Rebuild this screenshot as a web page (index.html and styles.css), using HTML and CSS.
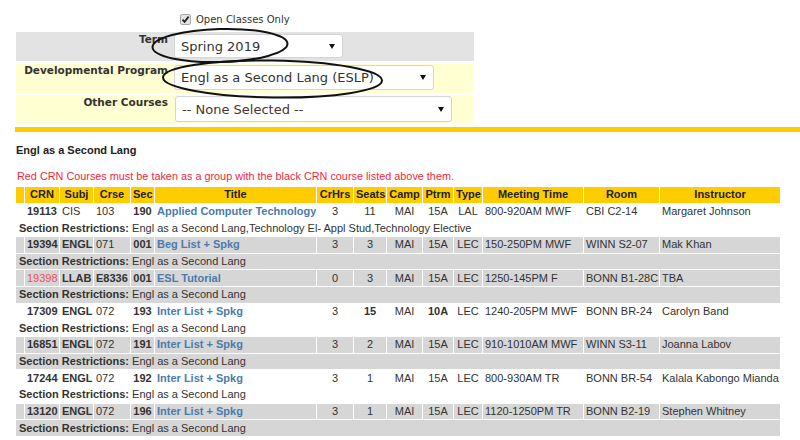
FILE: index.html
```html
<!DOCTYPE html>
<html>
<head>
<meta charset="utf-8">
<title>Class Search</title>
<link rel="stylesheet" href="styles.css">
</head>
<body>
<div class="page">
  <div class="form">
    <div class="check-line">
      <span class="checkbox"><svg width="9" height="9" viewBox="0 0 9 9"><path d="M1.5 4.6 L3.6 6.8 L7.6 1.6" fill="none" stroke="#222" stroke-width="1.8"/></svg></span>
      <span class="check-label">Open Classes Only</span>
    </div>
    <div class="frow grey">
      <div class="flabel">Term</div>
      <div class="select s1"><span>Spring 2019</span><i class="arrow"></i></div>
    </div>
    <div class="frow yel">
      <div class="flabel">Developmental Program</div>
      <div class="select s2"><span>Engl as a Second Lang (ESLP)</span><i class="arrow"></i></div>
    </div>
    <div class="frow yel r3">
      <div class="flabel">Other Courses</div>
      <div class="select s3"><span class="none">-- None Selected --</span><i class="arrow"></i></div>
    </div>
  </div>
  <div class="bar"></div>

  <h3 class="heading">Engl as a Second Lang</h3>
  <p class="note">Red CRN Courses must be taken as a group with the black CRN course listed above them.</p>

  <table class="courses">
    <colgroup>
      <col class="c0"><col class="c1"><col class="c2"><col class="c3"><col class="c4"><col class="c5"><col class="c6"><col class="c7"><col class="c8"><col class="c9"><col class="c10"><col class="c11"><col class="c12"><col class="c13">
    </colgroup>
    <thead>
      <tr><th></th><th>CRN</th><th>Subj</th><th>Crse</th><th>Sec</th><th>Title</th><th>CrHrs</th><th>Seats</th><th>Camp</th><th>Ptrm</th><th>Type</th><th>Meeting Time</th><th>Room</th><th>Instructor</th></tr>
    </thead>
    <tbody>
      <tr class="w"><td></td><td class="b ctr">19113</td><td>CIS</td><td>103</td><td class="b ctr">190</td><td><a class="lnk">Applied Computer Technology</a></td><td class="ctr">3</td><td class="ctr">11</td><td class="ctr">MAI</td><td class="ctr">15A</td><td class="ctr">LAL</td><td>800-920AM MWF</td><td>CBI C2-14</td><td>Margaret Johnson</td></tr>
      <tr class="w"><td colspan="14" class="res"><b>Section Restrictions:</b> Engl as a Second Lang,Technology El- Appl Stud,Technology Elective</td></tr>

      <tr class="g"><td></td><td class="b ctr">19394</td><td class="b">ENGL</td><td>071</td><td class="b ctr">001</td><td><a class="lnk">Beg List + Spkg</a></td><td class="ctr">3</td><td class="ctr">3</td><td class="ctr">MAI</td><td class="ctr">15A</td><td class="ctr">LEC</td><td>150-250PM MWF</td><td>WINN S2-07</td><td>Mak Khan</td></tr>
      <tr class="g"><td colspan="14" class="res"><b>Section Restrictions:</b> Engl as a Second Lang</td></tr>

      <tr class="g"><td></td><td class="ctr red">19398</td><td class="b">LLAB</td><td class="b">E8336</td><td class="b ctr">001</td><td><a class="lnk">ESL Tutorial</a></td><td class="ctr">0</td><td class="ctr">3</td><td class="ctr">MAI</td><td class="ctr">15A</td><td class="ctr">LEC</td><td>1250-145PM F</td><td>BONN B1-28C</td><td>TBA</td></tr>
      <tr class="g"><td colspan="14" class="res"><b>Section Restrictions:</b> Engl as a Second Lang</td></tr>

      <tr class="w"><td></td><td class="b ctr">17309</td><td class="b">ENGL</td><td>072</td><td class="b ctr">193</td><td><a class="lnk">Inter List + Spkg</a></td><td class="ctr">3</td><td class="ctr b">15</td><td class="ctr">MAI</td><td class="ctr b">10A</td><td class="ctr">LEC</td><td>1240-205PM MWF</td><td>BONN BR-24</td><td>Carolyn Band</td></tr>
      <tr class="w"><td colspan="14" class="res"><b>Section Restrictions:</b> Engl as a Second Lang</td></tr>

      <tr class="g"><td></td><td class="b ctr">16851</td><td class="b">ENGL</td><td>072</td><td class="b ctr">191</td><td><a class="lnk">Inter List + Spkg</a></td><td class="ctr">3</td><td class="ctr">2</td><td class="ctr">MAI</td><td class="ctr">15A</td><td class="ctr">LEC</td><td>910-1010AM MWF</td><td>WINN S3-11</td><td>Joanna Labov</td></tr>
      <tr class="g"><td colspan="14" class="res"><b>Section Restrictions:</b> Engl as a Second Lang</td></tr>

      <tr class="w"><td></td><td class="b ctr">17244</td><td class="b">ENGL</td><td>072</td><td class="b ctr">192</td><td><a class="lnk">Inter List + Spkg</a></td><td class="ctr">3</td><td class="ctr">1</td><td class="ctr">MAI</td><td class="ctr">15A</td><td class="ctr">LEC</td><td>800-930AM TR</td><td>BONN BR-54</td><td>Kalala Kabongo Mianda</td></tr>
      <tr class="w"><td colspan="14" class="res"><b>Section Restrictions:</b> Engl as a Second Lang</td></tr>

      <tr class="g"><td></td><td class="b ctr">13120</td><td class="b">ENGL</td><td>072</td><td class="b ctr">196</td><td><a class="lnk">Inter List + Spkg</a></td><td class="ctr">3</td><td class="ctr">1</td><td class="ctr">MAI</td><td class="ctr">15A</td><td class="ctr">LEC</td><td>1120-1250PM TR</td><td>BONN B2-19</td><td>Stephen Whitney</td></tr>
      <tr class="g"><td colspan="14" class="res"><b>Section Restrictions:</b> Engl as a Second Lang</td></tr>
    </tbody>
  </table>

  <svg class="marks" width="800" height="140" viewBox="0 0 800 140">
    <ellipse cx="220" cy="45.5" rx="67.5" ry="16.5" transform="rotate(-1.5 220 45.5)" fill="none" stroke="#111" stroke-width="2"/>
    <ellipse cx="272.5" cy="79" rx="109.5" ry="18.5" transform="rotate(0.8 272.5 79)" fill="none" stroke="#111" stroke-width="2"/>
  </svg>
</div>
</body>
</html>
```

FILE: styles.css
```css
html, body {
  margin: 0;
  padding: 0;
  background: #ffffff;
}

.page {
  position: relative;
  width: 800px;
  height: 440px;
  overflow: hidden;
  font-family: "Liberation Sans", Arial, sans-serif;
  color: #333;
}

.form {
  width: 458px;
  margin-left: 16px;
  font-family: "DejaVu Sans", Verdana, sans-serif;
}

.check-line {
  display: flex;
  align-items: center;
  height: 19px;
  padding-top: 10px;
  padding-left: 164px;
  margin-bottom: 3px;
}

.checkbox {
  display: inline-flex;
  align-items: center;
  justify-content: center;
  width: 9px;
  height: 9px;
  border: 1px solid #a8a8a8;
  border-radius: 2px;
  background: #e4e4e4;
}

.check-label {
  margin-left: 5px;
  font-size: 10px;
  color: #333;
}

.frow {
  display: flex;
  align-items: flex-start;
  margin-bottom: 2px;
}

.frow.grey {
  background: #e3e3e3;
  height: 29px;
}

.frow.yel {
  background: #ffffd2;
  height: 30px;
}

.frow.r3 {
  height: 28px;
}

.flabel {
  width: 152px;
  padding-right: 4px;
  padding-top: 1px;
  text-align: right;
  font-size: 10.5px;
  font-weight: bold;
  line-height: 12px;
  color: #333;
}

.select {
  display: flex;
  align-items: center;
  justify-content: space-between;
  box-sizing: border-box;
  margin-left: 2px;
  padding: 0 7px 0 6px;
  background: #fff;
  border: 1px solid #d4d4d4;
  border-radius: 3px;
  font-size: 13px;
  color: #333;
}

.s1 { width: 169px; height: 24px; margin-top: 2px; }
.s2 { width: 260px; height: 25px; margin-top: 2px; }
.s3 { width: 277px; height: 26px; margin-top: 1px; margin-left: 3px; }

.none { color: #4a3434; }

.arrow {
  display: block;
  width: 0;
  height: 0;
  border-left: 3px solid transparent;
  border-right: 3px solid transparent;
  border-top: 5px solid #111;
}

.bar {
  margin-top: 4px;
  margin-left: 15px;
  height: 5px;
  background: #ffcc00;
}

.heading {
  margin: 12px 0 0 16px;
  font-size: 11px;
  line-height: 13px;
  font-weight: bold;
  color: #222;
}

.note {
  margin: 13px 0 0 17px;
  font-size: 10.85px;
  line-height: 13px;
  color: #f0283c;
}

.courses {
  margin: 3px 0 0 15px;
  border-collapse: separate;
  border-spacing: 1px;
  table-layout: fixed;
  width: 766px;
  font-size: 11px;
}

.c0 { width: 8px; }
.c1 { width: 34px; }
.c2 { width: 33px; }
.c3 { width: 36px; }
.c4 { width: 23px; }
.c5 { width: 161px; }
.c6 { width: 36px; }
.c7 { width: 32px; }
.c8 { width: 35px; }
.c9 { width: 30px; }
.c10 { width: 28px; }
.c11 { width: 100px; }
.c12 { width: 75px; }
.c13 { width: 120px; }

.courses th,
.courses td {
  height: 15.67px;
  padding: 0 2px;
  line-height: 13px;
  white-space: nowrap;
  overflow: hidden;
  text-align: left;
  vertical-align: middle;
}

.courses th {
  background: #ffcc00;
  font-weight: bold;
  text-align: center;
  color: #222;
}

.courses tr.g td {
  background: #d6d6d6;
}

.courses td.ctr { text-align: center; }
.courses td.b { font-weight: bold; }
.courses td.red { color: #f0505e; }

.courses td.res {
  padding-left: 3px;
}

.lnk {
  color: #4b7bab;
  font-weight: bold;
  text-decoration: none;
}

.marks {
  position: absolute;
  left: 0;
  top: 0;
  pointer-events: none;
}
```
